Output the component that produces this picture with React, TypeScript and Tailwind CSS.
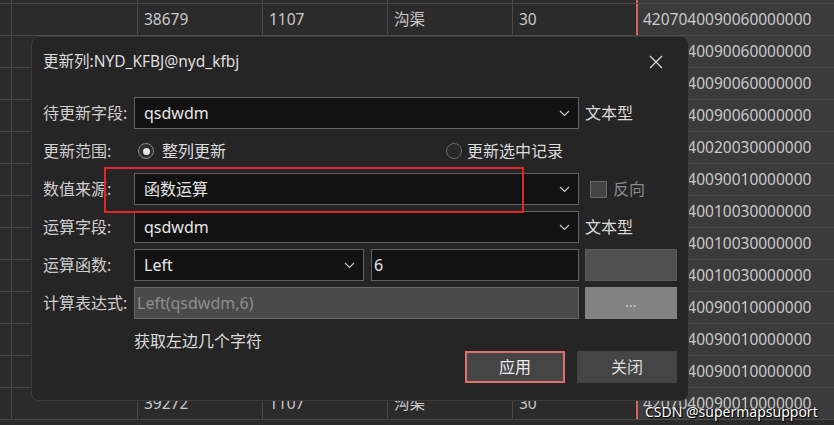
import React from "react";

const FONT = { fontFamily: '"Noto Sans", "Noto Sans CJK SC", sans-serif' };

const SUFFIXES = [
  "40090060000000",
  "40090060000000",
  "40090060000000",
  "40090060000000",
  "40020030000000",
  "40090010000000",
  "40010030000000",
  "40010030000000",
  "40010030000000",
  "40090010000000",
  "40090010000000",
  "40090010000000",
  "40090010000000",
];

const ROWS = SUFFIXES.map((s, i) => ({
  id: i === SUFFIXES.length - 1 ? "39272" : i === 0 ? "38679" : String(38680 + i * 37),
  code: "1107",
  name: "沟渠",
  n: "30",
  full: "42070" + s,
}));

function Chevron() {
  return (
    <svg width="11" height="7" viewBox="0 0 11 7" className="shrink-0">
      <polyline points="1,1 5.5,5.5 10,1" fill="none" stroke="#c8c8c8" strokeWidth="1.2" />
    </svg>
  );
}

function Select({ value, className = "" }: { value: string; className?: string }) {
  return (
    <div
      className={`flex h-[32px] items-center justify-between border border-[#636363] bg-[#121212] pl-[9px] pr-[8px] text-[16px] text-[#e6e6e6] ${className}`}
    >
      <span>{value}</span>
      <Chevron />
    </div>
  );
}

function Label({ children }: { children: React.ReactNode }) {
  return <span className="w-[91px] shrink-0 text-[16px] text-[#cfcfcf]">{children}</span>;
}

function Grid() {
  const cell = "flex w-[125px] shrink-0 items-center border-r border-[#4b4b4b] pl-[6px]";
  return (
    <div className="text-[15.5px] text-[#c9c9c9]">
      <div className="flex h-[4px] border-b border-[#4b4b4b]">
        <div className="w-[12px] shrink-0 border-r border-[#4b4b4b]" />
        <div className="w-[126px] shrink-0 border-r border-[#4b4b4b]" />
        <div className="w-[125px] shrink-0 border-r border-[#4b4b4b]" />
        <div className="w-[125px] shrink-0 border-r border-[#4b4b4b]" />
        <div className="w-[125px] shrink-0 border-r border-[#4b4b4b]" />
        <div className="w-[125px] shrink-0 border-r-2 border-[#d6655c]" />
        <div className="flex-1 bg-[#3b3b3b]" />
      </div>
      {ROWS.map((r, i) => (
        <div key={i} className="flex h-[32px] border-b border-[#4b4b4b]">
          <div className="w-[12px] shrink-0 border-r border-[#4b4b4b]" />
          <div className="w-[126px] shrink-0 border-r border-[#4b4b4b]" />
          <div className={cell}>{r.id}</div>
          <div className={cell}>{r.code}</div>
          <div className={cell}>{r.name}</div>
          <div className="flex w-[125px] shrink-0 items-center border-r-2 border-[#d6655c] pl-[6px]">{r.n}</div>
          <div className="flex flex-1 items-center bg-[#3b3b3b] pl-[5px]">{r.full}</div>
        </div>
      ))}
    </div>
  );
}

export default function App() {
  return (
    <div className="relative h-[425px] w-[834px] overflow-hidden bg-[#2b2b2b]" style={FONT}>
      <Grid />

      {/* dialog */}
      <div className="absolute left-[31px] top-[36px] flex h-[365px] w-[658px] flex-col rounded-[8px] border border-[#3c3c3c] bg-[#252525] px-[11px]">
        <div className="flex h-[48px] items-center justify-between pt-[2px]">
          <span className="text-[15.5px] text-[#dedede]">更新列:NYD_KFBJ@nyd_kfbj</span>
          <svg width="14" height="14" viewBox="0 0 14 14" className="mr-[14px]">
            <path d="M1 1 L13 13 M13 1 L1 13" stroke="#d8d8d8" strokeWidth="1.3" />
          </svg>
        </div>

        <div className="mt-[12px] flex flex-col gap-[6px]">
          <div className="flex h-[32px] items-center">
            <Label>待更新字段:</Label>
            <Select value="qsdwdm" className="w-[445px]" />
            <span className="ml-[6px] text-[16px] text-[#dadada]">文本型</span>
          </div>

          <div className="flex h-[32px] items-center">
            <Label>更新范围:</Label>
            <div className="ml-[4px] flex h-[16px] w-[16px] items-center justify-center rounded-full border border-[#8a8a8a] bg-[#2e2e2e]">
              <div className="h-[7px] w-[7px] rounded-full bg-[#e6e6e6]" />
            </div>
            <span className="ml-[8px] text-[16px] text-[#dcdcdc]">整列更新</span>
            <div className="ml-[220px] h-[16px] w-[16px] rounded-full border border-[#6a6a6a] bg-[#2a2a2a]" />
            <span className="ml-[5px] text-[16px] text-[#dcdcdc]">更新选中记录</span>
          </div>

          <div className="relative flex h-[32px] items-center">
            <Label>数值来源:</Label>
            <Select value="函数运算" className="w-[445px]" />
            <div className="ml-[11px] h-[17px] w-[17px] border border-[#6a6a6a] bg-[#444444]" />
            <span className="ml-[6px] text-[16px] text-[#8a8a8a]">反向</span>
            <div className="pointer-events-none absolute left-[61px] top-[-6px] h-[46px] w-[420px] border-2 border-[#e3242b]" />
          </div>

          <div className="flex h-[32px] items-center">
            <Label>运算字段:</Label>
            <Select value="qsdwdm" className="w-[445px]" />
            <span className="ml-[6px] text-[16px] text-[#dadada]">文本型</span>
          </div>

          <div className="flex h-[32px] items-center">
            <Label>运算函数:</Label>
            <Select value="Left" className="w-[230px]" />
            <div className="ml-[7px] flex h-[32px] w-[208px] items-center border border-[#636363] bg-[#121212] pl-[2px] text-[16px] text-[#e6e6e6]">
              6
            </div>
            <div className="ml-[6px] h-[32px] w-[92px] border border-[#5c5c5c] bg-[#505050]" />
          </div>

          <div className="flex h-[32px] items-center">
            <Label>计算表达式:</Label>
            <div className="flex h-[32px] w-[445px] items-center border border-[#686868] bg-[#4a4a4a] pl-[2px] text-[16px] text-[#8e8e8e]">
              Left(qsdwdm,6)
            </div>
            <div className="ml-[6px] flex h-[32px] w-[92px] items-center justify-center bg-[#828282] pb-[4px] text-[14px] text-[#cfcfcf]">
              ...
            </div>
          </div>

          <div className="flex h-[32px] items-center pl-[91px] text-[16px] text-[#dcdcdc]">获取左边几个字符</div>
        </div>

        <div className="mt-[-6px] flex justify-end gap-[12px]">
          <button className="h-[32px] w-[100px] border-2 border-[#e0706a] bg-[#454545] text-[16px] text-[#ececec]">
            应用
          </button>
          <button className="h-[32px] w-[100px] bg-[#454545] text-[16px] text-[#dcdcdc]">关闭</button>
        </div>
      </div>

      <span
        className="absolute left-[645px] top-[401px] text-[14px] text-white"
        style={{ textShadow: "0 0 2px #000, 1px 1px 1px #000" }}
      >
        CSDN @supermapsupport
      </span>
    </div>
  );
}
